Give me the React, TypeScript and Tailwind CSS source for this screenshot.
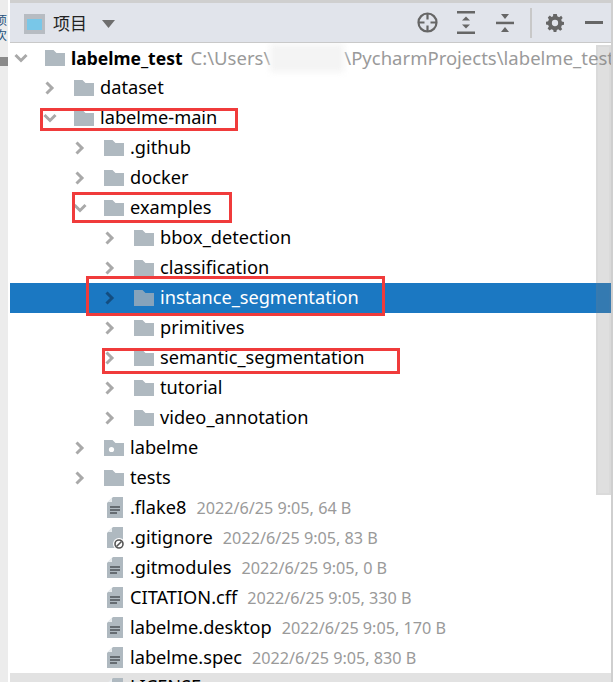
type Row = {
  name: string;
  level: number;
  kind: 'folder' | 'pkg' | 'file' | 'ignored';
  open?: boolean;
  meta?: string;
  selected?: boolean;
  bold?: boolean;
  leaf?: boolean;
};

const rows: Row[] = [
  { name: 'labelme_test', level: 0, kind: 'folder', open: true, bold: true },
  { name: 'dataset', level: 1, kind: 'folder' },
  { name: 'labelme-main', level: 1, kind: 'folder', open: true },
  { name: '.github', level: 2, kind: 'folder' },
  { name: 'docker', level: 2, kind: 'folder' },
  { name: 'examples', level: 2, kind: 'folder', open: true },
  { name: 'bbox_detection', level: 3, kind: 'folder' },
  { name: 'classification', level: 3, kind: 'folder' },
  { name: 'instance_segmentation', level: 3, kind: 'folder', selected: true },
  { name: 'primitives', level: 3, kind: 'folder' },
  { name: 'semantic_segmentation', level: 3, kind: 'folder' },
  { name: 'tutorial', level: 3, kind: 'folder' },
  { name: 'video_annotation', level: 3, kind: 'folder' },
  { name: 'labelme', level: 2, kind: 'pkg' },
  { name: 'tests', level: 2, kind: 'folder' },
  { name: '.flake8', level: 2, kind: 'file', leaf: true, meta: '2022/6/25 9:05, 64 B' },
  { name: '.gitignore', level: 2, kind: 'ignored', leaf: true, meta: '2022/6/25 9:05, 83 B' },
  { name: '.gitmodules', level: 2, kind: 'file', leaf: true, meta: '2022/6/25 9:05, 0 B' },
  { name: 'CITATION.cff', level: 2, kind: 'file', leaf: true, meta: '2022/6/25 9:05, 330 B' },
  { name: 'labelme.desktop', level: 2, kind: 'file', leaf: true, meta: '2022/6/25 9:05, 170 B' },
  { name: 'labelme.spec', level: 2, kind: 'file', leaf: true, meta: '2022/6/25 9:05, 830 B' },
];

const indent = ['pl-[4px]', 'pl-[33px]', 'pl-[63px]', 'pl-[93px]'];

function Chevron({ open, selected }: { open?: boolean; selected?: boolean }) {
  const color = selected ? '#134d80' : '#a9a9a9';
  return (
    <svg width="14" height="14" viewBox="0 0 14 14" fill="none" className="shrink-0">
      <path
        d={open ? 'M1.5 4 L7 9.5 L12.5 4' : 'M3.5 1.5 L9 7 L3.5 12.5'}
        stroke={color}
        strokeWidth="3"
      />
    </svg>
  );
}

function Folder({ selected, dot }: { selected?: boolean; dot?: boolean }) {
  const fill = selected ? '#86a3bb' : '#afb9c0';
  return (
    <svg width="20" height="16" viewBox="0 0 20 16" className="shrink-0">
      <path d="M0 0 H8.5 L11.5 3 H20 V16 H0 Z" fill={fill} />
      {dot && <circle cx="7.5" cy="9.5" r="2.6" fill="#fff" />}
    </svg>
  );
}

function FileIcon({ ignored }: { ignored?: boolean }) {
  return (
    <svg width="18" height="23" viewBox="0 0 18 23" className="shrink-0">
      <path d="M0 6 L6 0 H16 V21 H0 Z" fill="#afb9c0" />
      <path d="M0.5 5 L5 0.5 V5 Z" fill="#e9edf0" />
      {ignored ? (
        <>
          <circle cx="12" cy="17" r="6" fill="#fff" />
          <circle cx="12" cy="17" r="4" fill="none" stroke="#555" strokeWidth="1.6" />
          <path d="M9.5 19.5 L14.5 14.5" stroke="#555" strokeWidth="1.6" />
        </>
      ) : (
        <path d="M3 10 H13 M3 13 H13 M3 16 H10" stroke="#4d5358" strokeWidth="1.3" />
      )}
    </svg>
  );
}

function TreeRow({ row }: { row: Row }) {
  const isFile = row.kind === 'file' || row.kind === 'ignored';
  return (
    <div
      className={`flex h-[30px] items-center whitespace-nowrap ${indent[row.level]} ${
        row.selected ? 'bg-[#1b78c2] text-white' : 'text-black'
      }`}
    >
      <div className="flex w-[14px] shrink-0 justify-center">
        {!row.leaf && <Chevron open={row.open} selected={row.selected} />}
      </div>
      <div className={`flex w-[40px] shrink-0 justify-end ${isFile ? 'pr-[2px]' : 'pr-[3px]'}`}>
        {isFile ? (
          <FileIcon ignored={row.kind === 'ignored'} />
        ) : (
          <Folder selected={row.selected} dot={row.kind === 'pkg'} />
        )}
      </div>
      <span className={`ml-[3px] ${row.bold ? 'text-[17.5px] font-bold' : ''}`}>{row.name}</span>
      {row.meta && <span className="ml-[10px] text-[16.2px] text-[#9a9a9a]">{row.meta}</span>}
      {row.bold && (
        <span className="ml-[8px] flex text-[18.5px] text-[#9a9a9a]">
          C:\Users\<span className="w-[74px] bg-[#f4f4f4] blur-[3px]" />\PycharmProjects\labelme_test
        </span>
      )}
    </div>
  );
}

export default function App() {
  return (
    <div className="relative flex h-[682px] w-[613px] overflow-hidden bg-white font-['Noto_Sans','Noto_Sans_CJK_SC',sans-serif] text-[18.2px]">
      {/* window sliver on the left */}
      <div className="flex w-[10px] shrink-0 flex-col overflow-hidden border-r-2 border-white bg-[#ececec] pt-[13px] text-[12px] leading-[15px] text-[#26537c]">
        <span className="-ml-[5px]">项</span>
        <span className="-ml-[5px]">次</span>
        <div className="mt-[14px] h-[9px] bg-[#8a8a8a]" />
      </div>

      <div className="flex min-w-0 flex-1 flex-col border-t-[3px] border-r-[2px] border-[#cfcfcf]">
        {/* tool window header */}
        <div className="flex h-[40px] shrink-0 items-center border-b border-[#c9c9c9] bg-[#e1e4eb] pl-[14px] pr-[8px]">
          <svg width="21" height="20" viewBox="0 0 21 20" className="mt-[2px] shrink-0">
            <rect width="21" height="20" fill="#b7bcc2" />
            <rect x="3" y="5" width="15" height="11" fill="#79c7e8" />
          </svg>
          <span className="ml-[8px] pt-[3px] text-[17px] text-[#222]">项目</span>
          <svg width="13" height="8" viewBox="0 0 13 8" className="ml-[15px] mt-[3px] shrink-0">
            <path d="M0 0 H13 L6.5 8 Z" fill="#6e6e6e" />
          </svg>
          <div className="ml-auto flex items-center">
            <svg width="21" height="21" viewBox="0 0 21 21" fill="none" stroke="#666" strokeWidth="2.2">
              <circle cx="10.5" cy="10.5" r="9" />
              <path d="M10.5 1.5 V7.5 M10.5 13.5 V19.5 M1.5 10.5 H7.5 M13.5 10.5 H19.5" />
            </svg>
            <svg width="18" height="23" viewBox="0 0 18 23" fill="#666" className="ml-[19px]">
              <rect width="18" height="2.5" y="0" />
              <rect width="18" height="2.5" y="20.5" />
              <path d="M9 5.5 L13 9.5 H5 Z M9 17.5 L5 13.5 H13 Z" />
            </svg>
            <svg width="18" height="18" viewBox="0 0 18 18" fill="#666" className="ml-[21px]">
              <rect width="18" height="2.5" y="7.7" />
              <path d="M5 0 H13 L9 5 Z M9 13 L13 18 H5 Z" />
            </svg>
            <div className="ml-[16px] h-[30px] w-[2px] bg-[#c8c8c8]" />
            <svg width="18" height="18" viewBox="0 0 20 20" fill="#666" className="ml-[14px]">
              <path
                fillRule="evenodd"
                d="M8 0 H12 L12.6 2.6 L14.6 3.5 L16.9 2 L18.5 4.5 L16.9 6.5 L17.6 8.4 L20 9 V12 L17.6 12.6 L16.8 14.6 L18 16.9 L15.8 18.5 L13.6 17 L12 17.7 L11.5 20 H8.5 L8 17.7 L6 16.9 L4 18.2 L1.8 16 L3.2 14 L2.4 12.2 L0 11.6 V8.5 L2.4 8 L3.2 6 L2 4 L4.2 1.8 L6.2 3.2 L7.8 2.5 Z M10 6.5 A3.5 3.5 0 1 0 10 13.5 A3.5 3.5 0 1 0 10 6.5 Z"
              />
            </svg>
            <div className="ml-[21px] h-[3px] w-[18px] bg-[#666]" />
          </div>
        </div>

        {/* project tree */}
        <div className="min-h-0 flex-1 overflow-hidden">
          {rows.map((row) => (
            <TreeRow key={row.name} row={row} />
          ))}
          <div className="flex h-[30px] items-start whitespace-nowrap bg-[#e2e2e2] pl-[63px]">
            <div className="flex w-[54px] shrink-0 justify-end pr-[2px] pt-[5px]">
              <FileIcon />
            </div>
            <span className="ml-[3px] leading-[26px] text-black">LICENSE</span>
          </div>
        </div>
      </div>

      {/* scrollbar thumb, translucent over the tree */}
      <div className="absolute left-[596px] top-[45px] h-[450px] w-[15px] border-2 border-[#808080]/5 bg-[#808080]/25" />

      {/* red annotations drawn over the tree */}
      <div className="absolute left-[40px] top-[108px] h-[23px] w-[198px] border-[3px] border-[#f03b3b]" />
      <div className="absolute left-[72px] top-[192px] h-[31px] w-[160px] border-[3px] border-[#f03b3b]" />
      <div className="absolute left-[86px] top-[276px] h-[40px] w-[299px] border-[3px] border-[#f03b3b]" />
      <div className="absolute left-[102px] top-[348px] h-[26px] w-[298px] border-[3px] border-[#f03b3b]" />
    </div>
  );
}
